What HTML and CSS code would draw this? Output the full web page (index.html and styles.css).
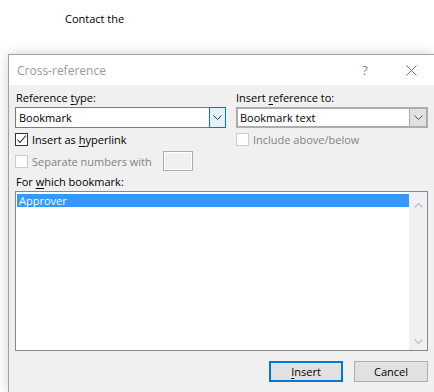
FILE: index.html
```html
<!DOCTYPE html>
<html lang="en">
<head>
  <meta charset="UTF-8">
  <title>Cross-reference</title>
  <link rel="stylesheet" href="styles.css">
</head>
<body>

  <p class="doc-text">Contact the</p>

  <div class="dialog">
    <div class="titlebar">
      <span class="title">Cross-reference</span>
      <span class="help">?</span>
      <span class="close">
        <svg width="11" height="11" viewBox="0 0 11 11"><path d="M0.5 0.5 L10.5 10.5 M10.5 0.5 L0.5 10.5" stroke="#777" stroke-width="1" fill="none"/></svg>
      </span>
    </div>

    <div class="dialog-body">
      <div class="columns">
        <div class="col">
          <div class="field-label">Reference <u>t</u>ype:</div>
          <div class="combo combo-focus">
            <span class="combo-value">Bookmark</span>
            <span class="combo-arrow">
              <svg width="9" height="5" viewBox="0 0 9 5"><path d="M0.5 0.5 L4.5 4.5 L8.5 0.5" stroke="#333" fill="none"/></svg>
            </span>
          </div>
          <div class="check-row">
            <span class="checkbox">
              <svg width="11" height="11" viewBox="0 0 11 11"><path d="M1.5 5.5 L4 8.5 L10 1.5" stroke="#222" stroke-width="1.1" fill="none"/></svg>
            </span>
            <span>Insert as <u>h</u>yperlink</span>
          </div>
          <div class="check-row check-row-tall disabled">
            <span class="checkbox"></span>
            <span>Separate numbers with</span>
            <span class="small-input"></span>
          </div>
        </div>

        <div class="col">
          <div class="field-label">Insert <u>r</u>eference to:</div>
          <div class="combo">
            <span class="combo-value">Bookmark text</span>
            <span class="combo-arrow">
              <svg width="9" height="5" viewBox="0 0 9 5"><path d="M0.5 0.5 L4.5 4.5 L8.5 0.5" stroke="#555" fill="none"/></svg>
            </span>
          </div>
          <div class="check-row disabled">
            <span class="checkbox"></span>
            <span>Include above/below</span>
          </div>
        </div>
      </div>

      <div class="field-label label-gap">For <u>w</u>hich bookmark:</div>
      <div class="listbox">
        <div class="list-items">
          <div class="list-item selected">Approver</div>
        </div>
        <div class="scrollbar">
          <svg width="9" height="5" viewBox="0 0 9 5"><path d="M0.5 4.5 L4.5 0.5 L8.5 4.5" stroke="#c2c2c2" stroke-width="1.4" fill="none"/></svg>
          <svg width="9" height="5" viewBox="0 0 9 5"><path d="M0.5 0.5 L4.5 4.5 L8.5 0.5" stroke="#c2c2c2" stroke-width="1.4" fill="none"/></svg>
        </div>
      </div>

      <div class="buttons">
        <button class="btn btn-default"><u>I</u>nsert</button>
        <button class="btn">Cancel</button>
      </div>
    </div>
  </div>

</body>
</html>
```

FILE: styles.css
```css
* { box-sizing: border-box; }
html, body {
  margin: 0;
  height: 100%;
  overflow: hidden;
}
body {
  background: #fff;
  font-family: 'Open Sans', 'Noto Sans', sans-serif;
  font-size: 11px;
  color: #000;
}
u { text-decoration-thickness: 1px; text-underline-offset: 2px; }

.doc-text {
  margin: 0;
  padding: 11px 0 0 65px;
  line-height: 15px;
}

/* dialog window */
.dialog {
  margin: 28px 0 0 8px;
  width: 426px;
  height: 338px;
  background: #f0f0f0;
  border-top: 1px solid #a0a0a0;
  border-left: 1px solid #a0a0a0;
  box-shadow: 0 0 12px rgba(0, 0, 0, 0.18);
}
.titlebar {
  height: 30px;
  background: #fff;
  display: flex;
  align-items: center;
  padding-left: 8px;
}
.title {
  flex: 1;
  color: #999;
  font-size: 12px;
}
.help {
  width: 46px;
  text-align: center;
  color: #888;
  font-size: 13px;
}
.close {
  width: 46px;
  display: flex;
  justify-content: center;
}

.dialog-body {
  padding: 5px 6px 0 6px;
}
.columns {
  display: grid;
  grid-template-columns: 211px 1fr;
  column-gap: 10px;
}
.field-label {
  line-height: 15px;
  margin-bottom: 2px;
  padding-left: 1px;
}
.col + .col .field-label { padding-left: 0; }
.label-gap { margin-top: 2px; }

/* combo boxes */
.combo {
  display: flex;
  height: 21px;
  background: #fff;
  border: 2px solid #adadad;
}
.combo-value {
  flex: 1;
  line-height: 17px;
  padding-left: 2px;
}
.combo-arrow {
  width: 17px;
  background: #e1e1e1;
  border-left: 1px solid #adadad;
  display: flex;
  align-items: center;
  justify-content: center;
}
.combo-focus {
  border: 1px solid #7a7a7a;
  border-right: none;
}
.combo-focus .combo-value {
  line-height: 19px;
  padding-left: 3px;
}
.combo-focus .combo-arrow {
  background: #e5f1fb;
  border: 1px solid #0078d7;
  margin: -1px 0;
}

/* checkboxes */
.check-row {
  display: flex;
  align-items: center;
  gap: 4px;
  height: 18px;
  margin-top: 2px;
}
.check-row-tall {
  height: 22px;
  margin-top: 2px;
}
.checkbox {
  width: 13px;
  height: 13px;
  border: 1px solid #333;
  background: #fff;
  display: flex;
  align-items: center;
  justify-content: center;
}
.disabled { color: #838383; }
.disabled .checkbox { border-color: #ccc; }
.small-input {
  width: 30px;
  height: 20px;
  margin-left: 7px;
  background: #f0f0f0;
  border: 1px solid #acacac;
  box-shadow: inset 0 0 0 1px #fff;
}

/* bookmark list */
.listbox {
  display: flex;
  height: 160px;
  background: #fff;
  border: 1px solid #828790;
}
.list-items {
  flex: 1;
  padding: 2px 0 0 1px;
}
.list-item {
  height: 13px;
  line-height: 13px;
  padding-left: 2px;
}
.list-item.selected {
  background: #3399ff;
  color: #fff;
}
.scrollbar {
  width: 18px;
  background: #f0f0f0;
  display: flex;
  flex-direction: column;
  justify-content: space-between;
  align-items: center;
  padding: 11px 0 6px;
}

/* buttons */
.buttons {
  display: flex;
  justify-content: flex-end;
  gap: 11px;
  margin-top: 10px;
}
.btn {
  width: 74px;
  height: 21px;
  padding: 0;
  font-family: inherit;
  font-size: 11px;
  color: #000;
  background: #e1e1e1;
  border: 1px solid #adadad;
}
.btn-default {
  border: 2px solid #0078d7;
}
```
